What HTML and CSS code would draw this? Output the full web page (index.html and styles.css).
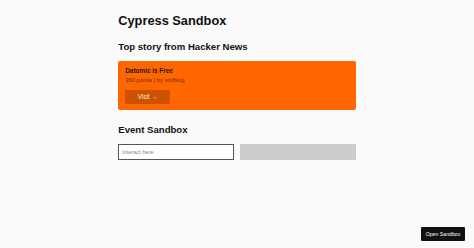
FILE: index.html
```html
<!DOCTYPE html>
<html lang="en">
<head>
<meta charset="utf-8">
<title>Cypress Sandbox</title>
<link rel="stylesheet" href="styles.css">
</head>
<body>
<main class="container">
  <h1 class="title">Cypress Sandbox</h1>
  <h2 class="section-title first">Top story from Hacker News</h2>
  <div class="story">
    <div class="story-title">Datomic is Free</div>
    <div class="story-meta">360 points | by xmlblog</div>
    <a class="visit" href="#">Visit →</a>
  </div>
  <h2 class="section-title events">Event Sandbox</h2>
  <div class="event-row">
    <input class="event-input" type="text" placeholder="Interact here">
    <div class="event-output"></div>
  </div>
</main>
<button class="open-sandbox" type="button">Open Sandbox</button>
</body>
</html>
```
FILE: styles.css
```css
html, body {
  margin: 0;
  padding: 0;
  background: #fafafa;
  font-family: "Liberation Sans", Arial, sans-serif;
  color: #111;
}

.container {
  width: 237.5px;
  margin: 0 auto;
  display: flex;
  flex-direction: column;
}

.title {
  margin: 13.1px 0 0;
  font-size: 12.8px;
  line-height: 15px;
  font-weight: 700;
}

.section-title {
  margin: 0;
  font-size: 9.6px;
  line-height: 11px;
  font-weight: 700;
}

.section-title.first {
  margin-top: 12.8px;
}

.story {
  margin-top: 9.1px;
  background: #ff6600;
  border-radius: 2px;
  padding: 6px 7px 6.5px;
  display: flex;
  flex-direction: column;
  align-items: flex-start;
  color: #1a1a1a;
}

.story-title {
  font-size: 6.4px;
  line-height: 7.4px;
  font-weight: 700;
}

.story-meta {
  margin-top: 2.6px;
  font-size: 5.8px;
  line-height: 6.7px;
  color: #6e2e00;
}

.visit {
  margin-top: 6.3px;
  width: 45px;
  height: 14px;
  background: #cc5200;
  border-radius: 1px;
  color: #fbe3d2;
  font-size: 6.4px;
  line-height: 14px;
  text-align: center;
  text-decoration: none;
}

.section-title.events {
  margin-top: 13.4px;
}

.event-row {
  margin-top: 8.8px;
  display: flex;
  justify-content: space-between;
}

.event-input {
  flex: none;
  width: 115.8px;
  height: 16px;
  box-sizing: border-box;
  margin: 0;
  border: 1px solid #555;
  background: #fff;
  padding: 0 3px;
  font-family: "Liberation Sans", Arial, sans-serif;
  font-size: 5.6px;
  color: #333;
  outline: none;
}

.event-input::placeholder {
  color: #888;
}

.event-output {
  flex: none;
  width: 115.6px;
  height: 16px;
  background: #cccccc;
}

.open-sandbox {
  position: fixed;
  right: 9px;
  bottom: 7px;
  width: 44px;
  height: 14px;
  margin: 0;
  padding: 0;
  border: none;
  border-radius: 1px;
  background: #111;
  color: #fff;
  font-family: "Liberation Sans", Arial, sans-serif;
  font-size: 5.2px;
  line-height: 14px;
  text-align: center;
}
```
